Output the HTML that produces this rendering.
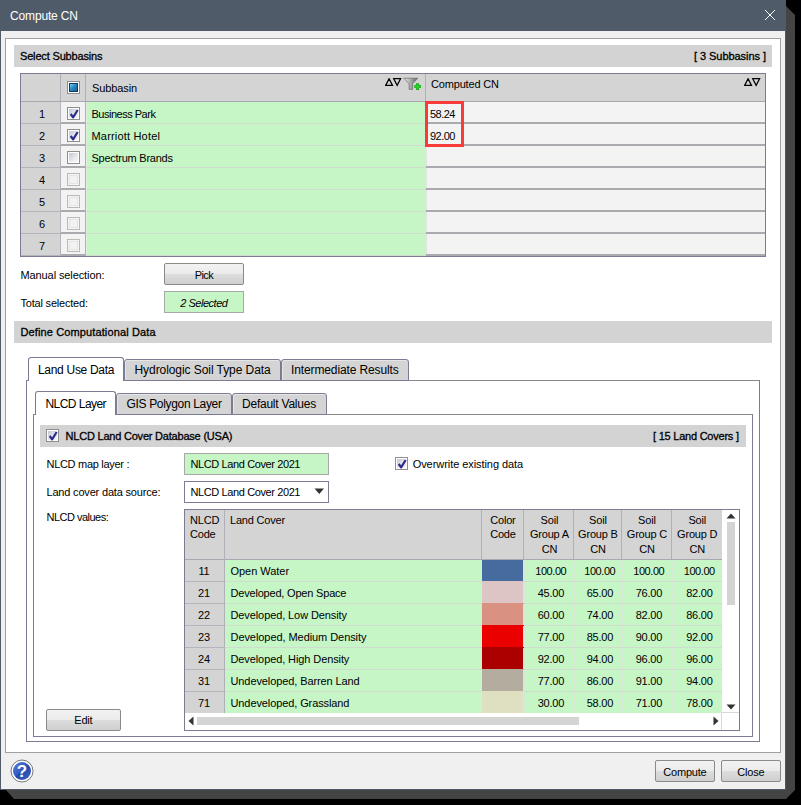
<!DOCTYPE html>
<html><head><meta charset="utf-8"><style>
html,body{margin:0;padding:0;background:#000;width:801px;height:805px;overflow:hidden}
body{position:relative;font-family:"Liberation Sans", sans-serif;color:#000}
.a{position:absolute;box-sizing:content-box}
.t{position:absolute;white-space:nowrap;font-family:"Liberation Sans", sans-serif}
</style></head><body>
<svg class="a" style="left:0;top:0" width="801" height="805"><polygon points="786,6 795,15 795,790 786,799 14,799 6,790" fill="#444"/></svg>
<div class="a" style="left:0px;top:0px;width:786px;height:790px;background:#f0f0f0;box-shadow:inset 0 0 0 1px #505b69;"></div>
<div class="a" style="left:0px;top:0px;width:786px;height:31px;background:#505b69;"></div>
<div class="t" style="top:9.84px;font-size:12px;line-height:12px;letter-spacing:-0.151px;color:#fff;left:10px;">Compute CN</div>
<svg class="a" style="left:763px;top:8px" width="14" height="14"><path d="M2 2 L12 12 M12 2 L2 12" stroke="#fff" stroke-width="1"/></svg>
<div class="a" style="left:5px;top:38px;width:776px;height:715px;background:#fff;box-shadow:inset 0 0 0 1px #a0a0a0;"></div>
<div class="a" style="left:14px;top:45px;width:758px;height:22px;background:#d3d3d3;"></div>
<div class="t" style="top:50.69px;font-size:11px;line-height:11px;-webkit-text-stroke:0.3px currentColor;letter-spacing:-0.167px;left:20px;">Select Subbasins</div>
<div class="t" style="top:50.69px;font-size:11px;line-height:11px;-webkit-text-stroke:0.3px currentColor;letter-spacing:-0.056px;right:35.056px;text-align:right;">[ 3 Subbasins ]</div>
<div class="a" style="left:20px;top:73px;width:746px;height:184px;background:#fff;"></div>
<div class="a" style="left:20px;top:73px;width:746px;height:28px;background:#d4d4d4;"></div>
<div class="a" style="left:20px;top:102px;width:40px;height:21px;background:#d4d4d4;"></div>
<div class="a" style="left:60px;top:102px;width:26px;height:21px;background:#f3f3f3;"></div>
<div class="a" style="left:86px;top:102px;width:340px;height:21px;background:#c6f5c6;"></div>
<div class="a" style="left:86px;top:102px;width:1px;height:21px;background:#dff0df;"></div>
<div class="a" style="left:426px;top:102px;width:339px;height:21px;background:#f3f3f3;"></div>
<div class="a" style="left:426px;top:102px;width:1px;height:21px;background:#e4e4e4;"></div>
<div class="a" style="left:20px;top:124px;width:40px;height:21px;background:#d4d4d4;"></div>
<div class="a" style="left:60px;top:124px;width:26px;height:21px;background:#f3f3f3;"></div>
<div class="a" style="left:86px;top:124px;width:340px;height:21px;background:#c6f5c6;"></div>
<div class="a" style="left:86px;top:124px;width:1px;height:21px;background:#dff0df;"></div>
<div class="a" style="left:426px;top:124px;width:339px;height:21px;background:#f3f3f3;"></div>
<div class="a" style="left:426px;top:124px;width:1px;height:21px;background:#e4e4e4;"></div>
<div class="a" style="left:20px;top:146px;width:40px;height:21px;background:#d4d4d4;"></div>
<div class="a" style="left:60px;top:146px;width:26px;height:21px;background:#f3f3f3;"></div>
<div class="a" style="left:86px;top:146px;width:340px;height:21px;background:#c6f5c6;"></div>
<div class="a" style="left:86px;top:146px;width:1px;height:21px;background:#dff0df;"></div>
<div class="a" style="left:426px;top:146px;width:339px;height:21px;background:#f3f3f3;"></div>
<div class="a" style="left:426px;top:146px;width:1px;height:21px;background:#e4e4e4;"></div>
<div class="a" style="left:20px;top:168px;width:40px;height:21px;background:#d4d4d4;"></div>
<div class="a" style="left:60px;top:168px;width:26px;height:21px;background:#f3f3f3;"></div>
<div class="a" style="left:86px;top:168px;width:340px;height:21px;background:#c6f5c6;"></div>
<div class="a" style="left:86px;top:168px;width:1px;height:21px;background:#dff0df;"></div>
<div class="a" style="left:426px;top:168px;width:339px;height:21px;background:#f3f3f3;"></div>
<div class="a" style="left:426px;top:168px;width:1px;height:21px;background:#e4e4e4;"></div>
<div class="a" style="left:20px;top:190px;width:40px;height:21px;background:#d4d4d4;"></div>
<div class="a" style="left:60px;top:190px;width:26px;height:21px;background:#f3f3f3;"></div>
<div class="a" style="left:86px;top:190px;width:340px;height:21px;background:#c6f5c6;"></div>
<div class="a" style="left:86px;top:190px;width:1px;height:21px;background:#dff0df;"></div>
<div class="a" style="left:426px;top:190px;width:339px;height:21px;background:#f3f3f3;"></div>
<div class="a" style="left:426px;top:190px;width:1px;height:21px;background:#e4e4e4;"></div>
<div class="a" style="left:20px;top:212px;width:40px;height:21px;background:#d4d4d4;"></div>
<div class="a" style="left:60px;top:212px;width:26px;height:21px;background:#f3f3f3;"></div>
<div class="a" style="left:86px;top:212px;width:340px;height:21px;background:#c6f5c6;"></div>
<div class="a" style="left:86px;top:212px;width:1px;height:21px;background:#dff0df;"></div>
<div class="a" style="left:426px;top:212px;width:339px;height:21px;background:#f3f3f3;"></div>
<div class="a" style="left:426px;top:212px;width:1px;height:21px;background:#e4e4e4;"></div>
<div class="a" style="left:20px;top:234px;width:40px;height:21px;background:#d4d4d4;"></div>
<div class="a" style="left:60px;top:234px;width:26px;height:21px;background:#f3f3f3;"></div>
<div class="a" style="left:86px;top:234px;width:340px;height:21px;background:#c6f5c6;"></div>
<div class="a" style="left:86px;top:234px;width:1px;height:21px;background:#dff0df;"></div>
<div class="a" style="left:426px;top:234px;width:339px;height:21px;background:#f3f3f3;"></div>
<div class="a" style="left:426px;top:234px;width:1px;height:21px;background:#e4e4e4;"></div>
<div class="a" style="left:20px;top:123px;width:40px;height:1px;background:#b4b4bc;"></div>
<div class="a" style="left:60px;top:122px;width:26px;height:2px;background:#a9a9ae;"></div>
<div class="a" style="left:86px;top:123px;width:340px;height:1px;background:#d0dcd0;"></div>
<div class="a" style="left:426px;top:122px;width:339px;height:2px;background:#a9a9ae;"></div>
<div class="t" style="top:108.69px;font-size:11px;line-height:11px;left:27.0px;width:30px;text-align:center;">1</div>
<div class="t" style="top:108.69px;font-size:11px;line-height:11px;letter-spacing:-0.493px;left:91.5px;">Business Park</div>
<div class="a" style="left:20px;top:145px;width:40px;height:1px;background:#b4b4bc;"></div>
<div class="a" style="left:60px;top:144px;width:26px;height:2px;background:#a9a9ae;"></div>
<div class="a" style="left:86px;top:145px;width:340px;height:1px;background:#d0dcd0;"></div>
<div class="a" style="left:426px;top:144px;width:339px;height:2px;background:#a9a9ae;"></div>
<div class="t" style="top:130.69px;font-size:11px;line-height:11px;left:27.0px;width:30px;text-align:center;">2</div>
<div class="t" style="top:130.69px;font-size:11px;line-height:11px;letter-spacing:0.182px;left:91.5px;">Marriott Hotel</div>
<div class="a" style="left:20px;top:167px;width:40px;height:1px;background:#b4b4bc;"></div>
<div class="a" style="left:60px;top:166px;width:26px;height:2px;background:#a9a9ae;"></div>
<div class="a" style="left:86px;top:167px;width:340px;height:1px;background:#d0dcd0;"></div>
<div class="a" style="left:426px;top:166px;width:339px;height:2px;background:#a9a9ae;"></div>
<div class="t" style="top:152.69px;font-size:11px;line-height:11px;left:27.0px;width:30px;text-align:center;">3</div>
<div class="t" style="top:152.69px;font-size:11px;line-height:11px;letter-spacing:-0.256px;left:91.5px;">Spectrum Brands</div>
<div class="a" style="left:20px;top:189px;width:40px;height:1px;background:#b4b4bc;"></div>
<div class="a" style="left:60px;top:188px;width:26px;height:2px;background:#a9a9ae;"></div>
<div class="a" style="left:86px;top:189px;width:340px;height:1px;background:#d0dcd0;"></div>
<div class="a" style="left:426px;top:188px;width:339px;height:2px;background:#a9a9ae;"></div>
<div class="t" style="top:174.69px;font-size:11px;line-height:11px;left:27.0px;width:30px;text-align:center;">4</div>
<div class="a" style="left:20px;top:211px;width:40px;height:1px;background:#b4b4bc;"></div>
<div class="a" style="left:60px;top:210px;width:26px;height:2px;background:#a9a9ae;"></div>
<div class="a" style="left:86px;top:211px;width:340px;height:1px;background:#d0dcd0;"></div>
<div class="a" style="left:426px;top:210px;width:339px;height:2px;background:#a9a9ae;"></div>
<div class="t" style="top:196.69px;font-size:11px;line-height:11px;left:27.0px;width:30px;text-align:center;">5</div>
<div class="a" style="left:20px;top:233px;width:40px;height:1px;background:#b4b4bc;"></div>
<div class="a" style="left:60px;top:232px;width:26px;height:2px;background:#a9a9ae;"></div>
<div class="a" style="left:86px;top:233px;width:340px;height:1px;background:#d0dcd0;"></div>
<div class="a" style="left:426px;top:232px;width:339px;height:2px;background:#a9a9ae;"></div>
<div class="t" style="top:218.69px;font-size:11px;line-height:11px;left:27.0px;width:30px;text-align:center;">6</div>
<div class="a" style="left:20px;top:255px;width:40px;height:1px;background:#b4b4bc;"></div>
<div class="a" style="left:60px;top:254px;width:26px;height:2px;background:#a9a9ae;"></div>
<div class="a" style="left:86px;top:255px;width:340px;height:1px;background:#d0dcd0;"></div>
<div class="a" style="left:426px;top:254px;width:339px;height:2px;background:#a9a9ae;"></div>
<div class="t" style="top:240.69px;font-size:11px;line-height:11px;left:27.0px;width:30px;text-align:center;">7</div>
<div class="a" style="left:60px;top:73px;width:1px;height:28px;background:#b0b0b8;"></div>
<div class="a" style="left:85px;top:73px;width:1px;height:184px;background:#b0b0b8;"></div>
<div class="a" style="left:60px;top:101px;width:1px;height:155px;background:#b4b4bc;"></div>
<div class="a" style="left:425px;top:73px;width:1px;height:28px;background:#b0b0b8;"></div>
<div class="a" style="left:20px;top:101px;width:746px;height:1px;background:#a8a8b0;"></div>
<div class="a" style="left:20px;top:73px;width:744px;height:182px;border:1px solid #7b7b96"></div>
<div class="t" style="top:82.69px;font-size:11px;line-height:11px;letter-spacing:-0.1px;left:92px;">Subbasin</div>
<div class="t" style="top:78.69px;font-size:11px;line-height:11px;letter-spacing:-0.17px;left:431px;">Computed CN</div>
<svg class="a" style="left:385px;top:78px" width="17" height="10"><path d="M4.1 0.7 L7.5 7.4 L0.6 7.4 Z M8.7 0.7 L15.6 0.7 L12.15 7.4 Z" fill="none" stroke="#000" stroke-width="1.25" stroke-linejoin="miter"/></svg>
<svg class="a" style="left:744px;top:78px" width="17" height="10"><path d="M4.1 0.7 L7.5 7.4 L0.6 7.4 Z M8.7 0.7 L15.6 0.7 L12.15 7.4 Z" fill="none" stroke="#000" stroke-width="1.25" stroke-linejoin="miter"/></svg>
<svg class="a" style="left:403px;top:77px" width="20" height="14"><defs><linearGradient id="fg" x1="0" x2="1"><stop offset="0" stop-color="#ececec"/><stop offset="0.45" stop-color="#b0b0b0"/><stop offset="0.7" stop-color="#8a8a8a"/><stop offset="1" stop-color="#707070"/></linearGradient></defs><path d="M0.8 1.2 L14.8 1.2 L9.6 6.8 L9.6 12.4 L6.1 12.4 L6.1 6.8 Z" fill="url(#fg)" stroke="#6a6a6a" stroke-width="0.7" stroke-linejoin="round"/><path d="M14.6 6.3 L14.6 12.9 M11.3 9.6 L17.9 9.6" stroke="#15a815" stroke-width="3"/><path d="M14.6 6.9 L14.6 12.3 M11.9 9.6 L17.3 9.6" stroke="#2bd42b" stroke-width="1.6"/></svg>
<div class="a" style="left:67px;top:81px;width:11px;height:11px;border:1px solid #8e8f8f;background:#fff"></div>
<div class="a" style="left:69px;top:83px;width:9px;height:9px;background:linear-gradient(135deg,#c3c7d4,#e9eaee 60%,#f7f7f7)"></div>
<div class="a" style="left:70px;top:84px;width:7px;height:7px;background:linear-gradient(135deg,#78d0f0,#2a8cc4 45%,#1f5a94);box-shadow:0 0 0 1px #0f3a68"></div>
<div class="a" style="left:67px;top:107px;width:11px;height:11px;border:1px solid #8e8f8f;background:#fff"></div>
<div class="a" style="left:69px;top:109px;width:9px;height:9px;background:linear-gradient(135deg,#c3c7d4,#e9eaee 60%,#f7f7f7)"></div>
<svg class="a" style="left:69px;top:109px" width="10" height="10"><path d="M1.7 5.0 L4.1 8.4 L8.7 1.0" fill="none" stroke="#2c2c8c" stroke-width="2.2" stroke-linejoin="round"/></svg>
<div class="a" style="left:67px;top:129px;width:11px;height:11px;border:1px solid #8e8f8f;background:#fff"></div>
<div class="a" style="left:69px;top:131px;width:9px;height:9px;background:linear-gradient(135deg,#c3c7d4,#e9eaee 60%,#f7f7f7)"></div>
<svg class="a" style="left:69px;top:131px" width="10" height="10"><path d="M1.7 5.0 L4.1 8.4 L8.7 1.0" fill="none" stroke="#2c2c8c" stroke-width="2.2" stroke-linejoin="round"/></svg>
<div class="a" style="left:67px;top:151px;width:11px;height:11px;border:1px solid #8e8f8f;background:#fff"></div>
<div class="a" style="left:69px;top:153px;width:9px;height:9px;background:linear-gradient(135deg,#c3c7d4,#e9eaee 60%,#f7f7f7)"></div>
<div class="a" style="left:67px;top:173px;width:11px;height:11px;border:1px solid #b9b9b9;background:#f4f4f4"></div>
<div class="a" style="left:69px;top:175px;width:9px;height:9px;background:#f2f2f2;box-shadow:inset 0 0 0 1px #e4e4e4"></div>
<div class="a" style="left:67px;top:195px;width:11px;height:11px;border:1px solid #b9b9b9;background:#f4f4f4"></div>
<div class="a" style="left:69px;top:197px;width:9px;height:9px;background:#f2f2f2;box-shadow:inset 0 0 0 1px #e4e4e4"></div>
<div class="a" style="left:67px;top:217px;width:11px;height:11px;border:1px solid #b9b9b9;background:#f4f4f4"></div>
<div class="a" style="left:69px;top:219px;width:9px;height:9px;background:#f2f2f2;box-shadow:inset 0 0 0 1px #e4e4e4"></div>
<div class="a" style="left:67px;top:239px;width:11px;height:11px;border:1px solid #b9b9b9;background:#f4f4f4"></div>
<div class="a" style="left:69px;top:241px;width:9px;height:9px;background:#f2f2f2;box-shadow:inset 0 0 0 1px #e4e4e4"></div>
<div class="a" style="left:425px;top:101px;width:33px;height:40px;border:3px solid #f73b3b"></div>
<div class="t" style="top:108.69px;font-size:11px;line-height:11px;letter-spacing:-0.533px;left:430px;">58.24</div>
<div class="t" style="top:130.69px;font-size:11px;line-height:11px;letter-spacing:-0.533px;left:430px;">92.00</div>
<div class="t" style="top:269.69px;font-size:11px;line-height:11px;letter-spacing:-0.101px;left:20.5px;">Manual selection:</div>
<div class="t" style="top:297.69px;font-size:11px;line-height:11px;letter-spacing:-0.202px;left:20.5px;">Total selected:</div>
<div class="a" style="left:164px;top:263px;width:78px;height:20px;border:1px solid #8a8a8a;border-radius:2px;background:linear-gradient(#f2f2f2 0%,#ebebeb 50%,#dddddd 50%,#cfcfcf 100%)"></div>
<div class="t" style="top:269.69px;font-size:11px;line-height:11px;letter-spacing:-0.594px;left:163.903px;width:80px;text-align:center;">Pick</div>
<div class="a" style="left:164px;top:291px;width:78px;height:20px;border:1px solid #a8a8a8;background:#c6f5c6"></div>
<div class="t" style="top:297.69px;font-size:11px;line-height:11px;letter-spacing:-0.465px;font-style:italic;left:163.8675px;width:80px;text-align:center;">2 Selected</div>
<div class="a" style="left:14px;top:321px;width:758px;height:22px;background:#d3d3d3;"></div>
<div class="t" style="top:326.69px;font-size:11px;line-height:11px;-webkit-text-stroke:0.3px currentColor;letter-spacing:0.122px;left:20.5px;">Define Computational Data</div>
<div class="a" style="left:26px;top:380px;width:732px;height:360px;border:1px solid #7b7b96;border-top-color:#888"></div>
<div class="a" style="left:124px;top:359px;width:155px;height:20px;border:1px solid #7b7b96;border-radius:3px 3px 0 0;background:#d4d4d4;box-shadow:inset 1px 1px 0 #e6e6e6"></div>
<div class="t" style="top:363.84px;font-size:12px;line-height:12px;letter-spacing:-0.07px;left:134.5px;">Hydrologic Soil Type Data</div>
<div class="a" style="left:281px;top:359px;width:126px;height:20px;border:1px solid #7b7b96;border-radius:3px 3px 0 0;background:#d4d4d4;box-shadow:inset 1px 1px 0 #e6e6e6"></div>
<div class="t" style="top:363.84px;font-size:12px;line-height:12px;letter-spacing:-0.12px;left:291px;">Intermediate Results</div>
<div class="a" style="left:28px;top:357px;width:94px;height:23px;border:1px solid #7b7b96;border-bottom:none;border-radius:3px 3px 0 0;background:#fff"></div>
<div class="t" style="top:363.84px;font-size:12px;line-height:12px;letter-spacing:-0.3px;left:38px;">Land Use Data</div>
<div class="a" style="left:33px;top:414px;width:718px;height:321px;border:1px solid #7b7b96;border-top-color:#888"></div>
<div class="a" style="left:116px;top:393px;width:114px;height:20px;border:1px solid #7b7b96;border-radius:3px 3px 0 0;background:#d4d4d4;box-shadow:inset 1px 1px 0 #e6e6e6"></div>
<div class="t" style="top:397.84px;font-size:12px;line-height:12px;letter-spacing:-0.33px;left:126.5px;">GIS Polygon Layer</div>
<div class="a" style="left:232px;top:393px;width:93px;height:20px;border:1px solid #7b7b96;border-radius:3px 3px 0 0;background:#d4d4d4;box-shadow:inset 1px 1px 0 #e6e6e6"></div>
<div class="t" style="top:397.84px;font-size:12px;line-height:12px;letter-spacing:-0.23px;left:242px;">Default Values</div>
<div class="a" style="left:35px;top:391px;width:79px;height:23px;border:1px solid #7b7b96;border-bottom:none;border-radius:3px 3px 0 0;background:#fff"></div>
<div class="t" style="top:397.84px;font-size:12px;line-height:12px;letter-spacing:-0.55px;left:45.5px;">NLCD Layer</div>
<div class="a" style="left:40px;top:425px;width:706px;height:22px;background:#d3d3d3;"></div>
<div class="a" style="left:46px;top:429px;width:11px;height:11px;border:1px solid #8e8f8f;background:#fff"></div>
<div class="a" style="left:48px;top:431px;width:9px;height:9px;background:linear-gradient(135deg,#c3c7d4,#e9eaee 60%,#f7f7f7)"></div>
<svg class="a" style="left:48px;top:431px" width="10" height="10"><path d="M1.7 5.0 L4.1 8.4 L8.7 1.0" fill="none" stroke="#2c2c8c" stroke-width="2.2" stroke-linejoin="round"/></svg>
<div class="t" style="top:430.69px;font-size:11px;line-height:11px;-webkit-text-stroke:0.3px currentColor;letter-spacing:-0.208px;left:65.5px;">NLCD Land Cover Database (USA)</div>
<div class="t" style="top:430.69px;font-size:11px;line-height:11px;-webkit-text-stroke:0.3px currentColor;letter-spacing:-0.229px;right:62.229px;text-align:right;">[ 15 Land Covers ]</div>
<div class="t" style="top:458.69px;font-size:11px;line-height:11px;letter-spacing:-0.295px;left:46.5px;">NLCD map layer :</div>
<div class="t" style="top:486.69px;font-size:11px;line-height:11px;letter-spacing:-0.183px;left:46.5px;">Land cover data source:</div>
<div class="t" style="top:511.69px;font-size:11px;line-height:11px;letter-spacing:-0.514px;left:46.5px;">NLCD values:</div>
<div class="a" style="left:184px;top:453px;width:143px;height:20px;border:1px solid #a8a8a8;background:#c6f5c6"></div>
<div class="t" style="top:458.69px;font-size:11px;line-height:11px;letter-spacing:-0.39px;left:190.5px;">NLCD Land Cover 2021</div>
<div class="a" style="left:184px;top:481px;width:143px;height:20px;border:1px solid #7b7b96;background:#fff"></div>
<div class="t" style="top:486.69px;font-size:11px;line-height:11px;letter-spacing:-0.39px;left:190.5px;">NLCD Land Cover 2021</div>
<svg class="a" style="left:314px;top:488px" width="11" height="7"><path d="M0.5 0.5 L10 0.5 L5.25 6 Z" fill="#333"/></svg>
<div class="a" style="left:395px;top:457px;width:11px;height:11px;border:1px solid #8e8f8f;background:#fff"></div>
<div class="a" style="left:397px;top:459px;width:9px;height:9px;background:linear-gradient(135deg,#c3c7d4,#e9eaee 60%,#f7f7f7)"></div>
<svg class="a" style="left:397px;top:459px" width="10" height="10"><path d="M1.7 5.0 L4.1 8.4 L8.7 1.0" fill="none" stroke="#2c2c8c" stroke-width="2.2" stroke-linejoin="round"/></svg>
<div class="t" style="top:458.69px;font-size:11px;line-height:11px;letter-spacing:-0.063px;left:412.7px;">Overwrite existing data</div>
<div class="a" style="left:184px;top:509px;width:555px;height:221px;background:#fff"></div>
<div class="a" style="left:184px;top:509px;width:538px;height:50px;background:#d4d4d4;"></div>
<div class="a" style="left:224px;top:509px;width:1px;height:50px;background:#b0b0b8;"></div>
<div class="a" style="left:481px;top:509px;width:1px;height:50px;background:#b0b0b8;"></div>
<div class="a" style="left:523px;top:509px;width:1px;height:50px;background:#b0b0b8;"></div>
<div class="a" style="left:573px;top:509px;width:1px;height:50px;background:#b0b0b8;"></div>
<div class="a" style="left:621px;top:509px;width:1px;height:50px;background:#b0b0b8;"></div>
<div class="a" style="left:671px;top:509px;width:1px;height:50px;background:#b0b0b8;"></div>
<div class="a" style="left:184px;top:559px;width:538px;height:1px;background:#a8a8b0;"></div>
<div class="t" style="top:514.69px;font-size:11px;line-height:11px;letter-spacing:-0.2px;left:190px;">NLCD</div>
<div class="t" style="top:528.69px;font-size:11px;line-height:11px;letter-spacing:-0.2px;left:190px;">Code</div>
<div class="t" style="top:514.69px;font-size:11px;line-height:11px;letter-spacing:-0.2px;left:230px;">Land Cover</div>
<div class="t" style="top:514.69px;font-size:11px;line-height:11px;letter-spacing:-0.2px;left:472.9px;width:60px;text-align:center;">Color</div>
<div class="t" style="top:528.69px;font-size:11px;line-height:11px;letter-spacing:-0.2px;left:472.9px;width:60px;text-align:center;">Code</div>
<div class="t" style="top:514.69px;font-size:11px;line-height:11px;letter-spacing:-0.2px;left:519.4px;width:60px;text-align:center;">Soil</div>
<div class="t" style="top:528.69px;font-size:11px;line-height:11px;letter-spacing:-0.2px;left:519.4px;width:60px;text-align:center;">Group A</div>
<div class="t" style="top:543.69px;font-size:11px;line-height:11px;letter-spacing:-0.2px;left:519.4px;width:60px;text-align:center;">CN</div>
<div class="t" style="top:514.69px;font-size:11px;line-height:11px;letter-spacing:-0.2px;left:567.9px;width:60px;text-align:center;">Soil</div>
<div class="t" style="top:528.69px;font-size:11px;line-height:11px;letter-spacing:-0.2px;left:567.9px;width:60px;text-align:center;">Group B</div>
<div class="t" style="top:543.69px;font-size:11px;line-height:11px;letter-spacing:-0.2px;left:567.9px;width:60px;text-align:center;">CN</div>
<div class="t" style="top:514.69px;font-size:11px;line-height:11px;letter-spacing:-0.2px;left:616.9px;width:60px;text-align:center;">Soil</div>
<div class="t" style="top:528.69px;font-size:11px;line-height:11px;letter-spacing:-0.2px;left:616.9px;width:60px;text-align:center;">Group C</div>
<div class="t" style="top:543.69px;font-size:11px;line-height:11px;letter-spacing:-0.2px;left:616.9px;width:60px;text-align:center;">CN</div>
<div class="t" style="top:514.69px;font-size:11px;line-height:11px;letter-spacing:-0.2px;left:667.1999999999999px;width:60px;text-align:center;">Soil</div>
<div class="t" style="top:528.69px;font-size:11px;line-height:11px;letter-spacing:-0.2px;left:667.1999999999999px;width:60px;text-align:center;">Group D</div>
<div class="t" style="top:543.69px;font-size:11px;line-height:11px;letter-spacing:-0.2px;left:667.1999999999999px;width:60px;text-align:center;">CN</div>
<div class="a" style="left:184px;top:560px;width:40px;height:22px;background:#d4d4d4;"></div>
<div class="a" style="left:184px;top:581px;width:40px;height:1px;background:#b4b4bc;"></div>
<div class="a" style="left:225px;top:560px;width:257px;height:22px;background:#c6f5c6;"></div>
<div class="a" style="left:225px;top:560px;width:1px;height:22px;background:#d8e8d6;"></div>
<div class="a" style="left:225px;top:581px;width:257px;height:1px;background:#cfdccf;"></div>
<div class="a" style="left:482px;top:560px;width:42px;height:21px;background:#466b9f;"></div>
<div class="a" style="left:523px;top:560px;width:50px;height:22px;background:#c6f5c6;"></div>
<div class="a" style="left:523px;top:560px;width:2px;height:22px;background:#d8e8d6;"></div>
<div class="a" style="left:523px;top:581px;width:50px;height:1px;background:#cfdccf;"></div>
<div class="t" style="top:565.69px;font-size:11px;line-height:11px;letter-spacing:-0.451px;left:525.7745px;width:50px;text-align:center;">100.00</div>
<div class="a" style="left:573px;top:560px;width:48px;height:22px;background:#c6f5c6;"></div>
<div class="a" style="left:573px;top:560px;width:2px;height:22px;background:#d8e8d6;"></div>
<div class="a" style="left:573px;top:581px;width:48px;height:1px;background:#cfdccf;"></div>
<div class="t" style="top:565.69px;font-size:11px;line-height:11px;letter-spacing:-0.451px;left:574.7745px;width:50px;text-align:center;">100.00</div>
<div class="a" style="left:621px;top:560px;width:50px;height:22px;background:#c6f5c6;"></div>
<div class="a" style="left:621px;top:560px;width:2px;height:22px;background:#d8e8d6;"></div>
<div class="a" style="left:621px;top:581px;width:50px;height:1px;background:#cfdccf;"></div>
<div class="t" style="top:565.69px;font-size:11px;line-height:11px;letter-spacing:-0.451px;left:623.7745px;width:50px;text-align:center;">100.00</div>
<div class="a" style="left:671px;top:560px;width:51px;height:22px;background:#c6f5c6;"></div>
<div class="a" style="left:671px;top:560px;width:2px;height:22px;background:#d8e8d6;"></div>
<div class="a" style="left:671px;top:581px;width:51px;height:1px;background:#cfdccf;"></div>
<div class="t" style="top:565.69px;font-size:11px;line-height:11px;letter-spacing:-0.451px;left:674.2745px;width:50px;text-align:center;">100.00</div>
<div class="t" style="top:565.69px;font-size:11px;line-height:11px;letter-spacing:-0.2px;left:183.9px;width:40px;text-align:center;">11</div>
<div class="t" style="top:565.69px;font-size:11px;line-height:11px;letter-spacing:-0.034px;left:230.5px;">Open Water</div>
<div class="a" style="left:184px;top:582px;width:40px;height:22px;background:#d4d4d4;"></div>
<div class="a" style="left:184px;top:603px;width:40px;height:1px;background:#b4b4bc;"></div>
<div class="a" style="left:225px;top:582px;width:257px;height:22px;background:#c6f5c6;"></div>
<div class="a" style="left:225px;top:582px;width:1px;height:22px;background:#d8e8d6;"></div>
<div class="a" style="left:225px;top:603px;width:257px;height:1px;background:#cfdccf;"></div>
<div class="a" style="left:482px;top:581px;width:42px;height:22px;background:#dec5c5;"></div>
<div class="a" style="left:523px;top:582px;width:50px;height:22px;background:#c6f5c6;"></div>
<div class="a" style="left:523px;top:582px;width:2px;height:22px;background:#d8e8d6;"></div>
<div class="a" style="left:523px;top:603px;width:50px;height:1px;background:#cfdccf;"></div>
<div class="t" style="top:587.69px;font-size:11px;line-height:11px;letter-spacing:-0.233px;left:525.8835px;width:50px;text-align:center;">45.00</div>
<div class="a" style="left:573px;top:582px;width:48px;height:22px;background:#c6f5c6;"></div>
<div class="a" style="left:573px;top:582px;width:2px;height:22px;background:#d8e8d6;"></div>
<div class="a" style="left:573px;top:603px;width:48px;height:1px;background:#cfdccf;"></div>
<div class="t" style="top:587.69px;font-size:11px;line-height:11px;letter-spacing:-0.233px;left:574.8835px;width:50px;text-align:center;">65.00</div>
<div class="a" style="left:621px;top:582px;width:50px;height:22px;background:#c6f5c6;"></div>
<div class="a" style="left:621px;top:582px;width:2px;height:22px;background:#d8e8d6;"></div>
<div class="a" style="left:621px;top:603px;width:50px;height:1px;background:#cfdccf;"></div>
<div class="t" style="top:587.69px;font-size:11px;line-height:11px;letter-spacing:-0.233px;left:623.8835px;width:50px;text-align:center;">76.00</div>
<div class="a" style="left:671px;top:582px;width:51px;height:22px;background:#c6f5c6;"></div>
<div class="a" style="left:671px;top:582px;width:2px;height:22px;background:#d8e8d6;"></div>
<div class="a" style="left:671px;top:603px;width:51px;height:1px;background:#cfdccf;"></div>
<div class="t" style="top:587.69px;font-size:11px;line-height:11px;letter-spacing:-0.233px;left:674.3835px;width:50px;text-align:center;">82.00</div>
<div class="t" style="top:587.69px;font-size:11px;line-height:11px;letter-spacing:-0.2px;left:183.9px;width:40px;text-align:center;">21</div>
<div class="t" style="top:587.69px;font-size:11px;line-height:11px;letter-spacing:-0.194px;left:230.5px;">Developed, Open Space</div>
<div class="a" style="left:184px;top:604px;width:40px;height:22px;background:#d4d4d4;"></div>
<div class="a" style="left:184px;top:625px;width:40px;height:1px;background:#b4b4bc;"></div>
<div class="a" style="left:225px;top:604px;width:257px;height:22px;background:#c6f5c6;"></div>
<div class="a" style="left:225px;top:604px;width:1px;height:22px;background:#d8e8d6;"></div>
<div class="a" style="left:225px;top:625px;width:257px;height:1px;background:#cfdccf;"></div>
<div class="a" style="left:482px;top:603px;width:42px;height:22px;background:#d99282;"></div>
<div class="a" style="left:523px;top:604px;width:50px;height:22px;background:#c6f5c6;"></div>
<div class="a" style="left:523px;top:604px;width:2px;height:22px;background:#d8e8d6;"></div>
<div class="a" style="left:523px;top:625px;width:50px;height:1px;background:#cfdccf;"></div>
<div class="t" style="top:609.69px;font-size:11px;line-height:11px;letter-spacing:-0.233px;left:525.8835px;width:50px;text-align:center;">60.00</div>
<div class="a" style="left:573px;top:604px;width:48px;height:22px;background:#c6f5c6;"></div>
<div class="a" style="left:573px;top:604px;width:2px;height:22px;background:#d8e8d6;"></div>
<div class="a" style="left:573px;top:625px;width:48px;height:1px;background:#cfdccf;"></div>
<div class="t" style="top:609.69px;font-size:11px;line-height:11px;letter-spacing:-0.233px;left:574.8835px;width:50px;text-align:center;">74.00</div>
<div class="a" style="left:621px;top:604px;width:50px;height:22px;background:#c6f5c6;"></div>
<div class="a" style="left:621px;top:604px;width:2px;height:22px;background:#d8e8d6;"></div>
<div class="a" style="left:621px;top:625px;width:50px;height:1px;background:#cfdccf;"></div>
<div class="t" style="top:609.69px;font-size:11px;line-height:11px;letter-spacing:-0.233px;left:623.8835px;width:50px;text-align:center;">82.00</div>
<div class="a" style="left:671px;top:604px;width:51px;height:22px;background:#c6f5c6;"></div>
<div class="a" style="left:671px;top:604px;width:2px;height:22px;background:#d8e8d6;"></div>
<div class="a" style="left:671px;top:625px;width:51px;height:1px;background:#cfdccf;"></div>
<div class="t" style="top:609.69px;font-size:11px;line-height:11px;letter-spacing:-0.233px;left:674.3835px;width:50px;text-align:center;">86.00</div>
<div class="t" style="top:609.69px;font-size:11px;line-height:11px;letter-spacing:-0.2px;left:183.9px;width:40px;text-align:center;">22</div>
<div class="t" style="top:609.69px;font-size:11px;line-height:11px;letter-spacing:-0.1px;left:230.5px;">Developed, Low Density</div>
<div class="a" style="left:184px;top:626px;width:40px;height:22px;background:#d4d4d4;"></div>
<div class="a" style="left:184px;top:647px;width:40px;height:1px;background:#b4b4bc;"></div>
<div class="a" style="left:225px;top:626px;width:257px;height:22px;background:#c6f5c6;"></div>
<div class="a" style="left:225px;top:626px;width:1px;height:22px;background:#d8e8d6;"></div>
<div class="a" style="left:225px;top:647px;width:257px;height:1px;background:#cfdccf;"></div>
<div class="a" style="left:482px;top:625px;width:42px;height:22px;background:#eb0000;"></div>
<div class="a" style="left:523px;top:626px;width:50px;height:22px;background:#c6f5c6;"></div>
<div class="a" style="left:523px;top:626px;width:2px;height:22px;background:#d8e8d6;"></div>
<div class="a" style="left:523px;top:647px;width:50px;height:1px;background:#cfdccf;"></div>
<div class="t" style="top:631.69px;font-size:11px;line-height:11px;letter-spacing:-0.233px;left:525.8835px;width:50px;text-align:center;">77.00</div>
<div class="a" style="left:573px;top:626px;width:48px;height:22px;background:#c6f5c6;"></div>
<div class="a" style="left:573px;top:626px;width:2px;height:22px;background:#d8e8d6;"></div>
<div class="a" style="left:573px;top:647px;width:48px;height:1px;background:#cfdccf;"></div>
<div class="t" style="top:631.69px;font-size:11px;line-height:11px;letter-spacing:-0.233px;left:574.8835px;width:50px;text-align:center;">85.00</div>
<div class="a" style="left:621px;top:626px;width:50px;height:22px;background:#c6f5c6;"></div>
<div class="a" style="left:621px;top:626px;width:2px;height:22px;background:#d8e8d6;"></div>
<div class="a" style="left:621px;top:647px;width:50px;height:1px;background:#cfdccf;"></div>
<div class="t" style="top:631.69px;font-size:11px;line-height:11px;letter-spacing:-0.233px;left:623.8835px;width:50px;text-align:center;">90.00</div>
<div class="a" style="left:671px;top:626px;width:51px;height:22px;background:#c6f5c6;"></div>
<div class="a" style="left:671px;top:626px;width:2px;height:22px;background:#d8e8d6;"></div>
<div class="a" style="left:671px;top:647px;width:51px;height:1px;background:#cfdccf;"></div>
<div class="t" style="top:631.69px;font-size:11px;line-height:11px;letter-spacing:-0.233px;left:674.3835px;width:50px;text-align:center;">92.00</div>
<div class="t" style="top:631.69px;font-size:11px;line-height:11px;letter-spacing:-0.2px;left:183.9px;width:40px;text-align:center;">23</div>
<div class="t" style="top:631.69px;font-size:11px;line-height:11px;letter-spacing:-0.066px;left:230.5px;">Developed, Medium Density</div>
<div class="a" style="left:184px;top:648px;width:40px;height:22px;background:#d4d4d4;"></div>
<div class="a" style="left:184px;top:669px;width:40px;height:1px;background:#b4b4bc;"></div>
<div class="a" style="left:225px;top:648px;width:257px;height:22px;background:#c6f5c6;"></div>
<div class="a" style="left:225px;top:648px;width:1px;height:22px;background:#d8e8d6;"></div>
<div class="a" style="left:225px;top:669px;width:257px;height:1px;background:#cfdccf;"></div>
<div class="a" style="left:482px;top:647px;width:42px;height:22px;background:#ab0000;"></div>
<div class="a" style="left:523px;top:648px;width:50px;height:22px;background:#c6f5c6;"></div>
<div class="a" style="left:523px;top:648px;width:2px;height:22px;background:#d8e8d6;"></div>
<div class="a" style="left:523px;top:669px;width:50px;height:1px;background:#cfdccf;"></div>
<div class="t" style="top:653.69px;font-size:11px;line-height:11px;letter-spacing:-0.233px;left:525.8835px;width:50px;text-align:center;">92.00</div>
<div class="a" style="left:573px;top:648px;width:48px;height:22px;background:#c6f5c6;"></div>
<div class="a" style="left:573px;top:648px;width:2px;height:22px;background:#d8e8d6;"></div>
<div class="a" style="left:573px;top:669px;width:48px;height:1px;background:#cfdccf;"></div>
<div class="t" style="top:653.69px;font-size:11px;line-height:11px;letter-spacing:-0.233px;left:574.8835px;width:50px;text-align:center;">94.00</div>
<div class="a" style="left:621px;top:648px;width:50px;height:22px;background:#c6f5c6;"></div>
<div class="a" style="left:621px;top:648px;width:2px;height:22px;background:#d8e8d6;"></div>
<div class="a" style="left:621px;top:669px;width:50px;height:1px;background:#cfdccf;"></div>
<div class="t" style="top:653.69px;font-size:11px;line-height:11px;letter-spacing:-0.233px;left:623.8835px;width:50px;text-align:center;">96.00</div>
<div class="a" style="left:671px;top:648px;width:51px;height:22px;background:#c6f5c6;"></div>
<div class="a" style="left:671px;top:648px;width:2px;height:22px;background:#d8e8d6;"></div>
<div class="a" style="left:671px;top:669px;width:51px;height:1px;background:#cfdccf;"></div>
<div class="t" style="top:653.69px;font-size:11px;line-height:11px;letter-spacing:-0.233px;left:674.3835px;width:50px;text-align:center;">96.00</div>
<div class="t" style="top:653.69px;font-size:11px;line-height:11px;letter-spacing:-0.2px;left:183.9px;width:40px;text-align:center;">24</div>
<div class="t" style="top:653.69px;font-size:11px;line-height:11px;letter-spacing:-0.1px;left:230.5px;">Developed, High Density</div>
<div class="a" style="left:184px;top:670px;width:40px;height:22px;background:#d4d4d4;"></div>
<div class="a" style="left:184px;top:691px;width:40px;height:1px;background:#b4b4bc;"></div>
<div class="a" style="left:225px;top:670px;width:257px;height:22px;background:#c6f5c6;"></div>
<div class="a" style="left:225px;top:670px;width:1px;height:22px;background:#d8e8d6;"></div>
<div class="a" style="left:225px;top:691px;width:257px;height:1px;background:#cfdccf;"></div>
<div class="a" style="left:482px;top:669px;width:42px;height:22px;background:#b3ac9f;"></div>
<div class="a" style="left:523px;top:670px;width:50px;height:22px;background:#c6f5c6;"></div>
<div class="a" style="left:523px;top:670px;width:2px;height:22px;background:#d8e8d6;"></div>
<div class="a" style="left:523px;top:691px;width:50px;height:1px;background:#cfdccf;"></div>
<div class="t" style="top:675.69px;font-size:11px;line-height:11px;letter-spacing:-0.233px;left:525.8835px;width:50px;text-align:center;">77.00</div>
<div class="a" style="left:573px;top:670px;width:48px;height:22px;background:#c6f5c6;"></div>
<div class="a" style="left:573px;top:670px;width:2px;height:22px;background:#d8e8d6;"></div>
<div class="a" style="left:573px;top:691px;width:48px;height:1px;background:#cfdccf;"></div>
<div class="t" style="top:675.69px;font-size:11px;line-height:11px;letter-spacing:-0.233px;left:574.8835px;width:50px;text-align:center;">86.00</div>
<div class="a" style="left:621px;top:670px;width:50px;height:22px;background:#c6f5c6;"></div>
<div class="a" style="left:621px;top:670px;width:2px;height:22px;background:#d8e8d6;"></div>
<div class="a" style="left:621px;top:691px;width:50px;height:1px;background:#cfdccf;"></div>
<div class="t" style="top:675.69px;font-size:11px;line-height:11px;letter-spacing:-0.233px;left:623.8835px;width:50px;text-align:center;">91.00</div>
<div class="a" style="left:671px;top:670px;width:51px;height:22px;background:#c6f5c6;"></div>
<div class="a" style="left:671px;top:670px;width:2px;height:22px;background:#d8e8d6;"></div>
<div class="a" style="left:671px;top:691px;width:51px;height:1px;background:#cfdccf;"></div>
<div class="t" style="top:675.69px;font-size:11px;line-height:11px;letter-spacing:-0.233px;left:674.3835px;width:50px;text-align:center;">94.00</div>
<div class="t" style="top:675.69px;font-size:11px;line-height:11px;letter-spacing:-0.2px;left:183.9px;width:40px;text-align:center;">31</div>
<div class="t" style="top:675.69px;font-size:11px;line-height:11px;letter-spacing:-0.1px;left:230.5px;">Undeveloped, Barren Land</div>
<div class="a" style="left:184px;top:692px;width:40px;height:22px;background:#d4d4d4;"></div>
<div class="a" style="left:184px;top:713px;width:40px;height:1px;background:#b4b4bc;"></div>
<div class="a" style="left:225px;top:692px;width:257px;height:22px;background:#c6f5c6;"></div>
<div class="a" style="left:225px;top:692px;width:1px;height:22px;background:#d8e8d6;"></div>
<div class="a" style="left:225px;top:713px;width:257px;height:1px;background:#cfdccf;"></div>
<div class="a" style="left:482px;top:691px;width:42px;height:22px;background:#dfdfc2;"></div>
<div class="a" style="left:523px;top:692px;width:50px;height:22px;background:#c6f5c6;"></div>
<div class="a" style="left:523px;top:692px;width:2px;height:22px;background:#d8e8d6;"></div>
<div class="a" style="left:523px;top:713px;width:50px;height:1px;background:#cfdccf;"></div>
<div class="t" style="top:697.69px;font-size:11px;line-height:11px;letter-spacing:-0.233px;left:525.8835px;width:50px;text-align:center;">30.00</div>
<div class="a" style="left:573px;top:692px;width:48px;height:22px;background:#c6f5c6;"></div>
<div class="a" style="left:573px;top:692px;width:2px;height:22px;background:#d8e8d6;"></div>
<div class="a" style="left:573px;top:713px;width:48px;height:1px;background:#cfdccf;"></div>
<div class="t" style="top:697.69px;font-size:11px;line-height:11px;letter-spacing:-0.233px;left:574.8835px;width:50px;text-align:center;">58.00</div>
<div class="a" style="left:621px;top:692px;width:50px;height:22px;background:#c6f5c6;"></div>
<div class="a" style="left:621px;top:692px;width:2px;height:22px;background:#d8e8d6;"></div>
<div class="a" style="left:621px;top:713px;width:50px;height:1px;background:#cfdccf;"></div>
<div class="t" style="top:697.69px;font-size:11px;line-height:11px;letter-spacing:-0.233px;left:623.8835px;width:50px;text-align:center;">71.00</div>
<div class="a" style="left:671px;top:692px;width:51px;height:22px;background:#c6f5c6;"></div>
<div class="a" style="left:671px;top:692px;width:2px;height:22px;background:#d8e8d6;"></div>
<div class="a" style="left:671px;top:713px;width:51px;height:1px;background:#cfdccf;"></div>
<div class="t" style="top:697.69px;font-size:11px;line-height:11px;letter-spacing:-0.233px;left:674.3835px;width:50px;text-align:center;">78.00</div>
<div class="t" style="top:697.69px;font-size:11px;line-height:11px;letter-spacing:-0.2px;left:183.9px;width:40px;text-align:center;">71</div>
<div class="t" style="top:697.69px;font-size:11px;line-height:11px;letter-spacing:-0.1px;left:230.5px;">Undeveloped, Grassland</div>
<div class="a" style="left:224px;top:559px;width:1px;height:154px;background:#b0b0b8;"></div>
<div class="a" style="left:722px;top:509px;width:17px;height:204px;background:#fff;"></div>
<div class="a" style="left:727px;top:522px;width:8px;height:83px;background:#d4d4d4;"></div>
<svg class="a" style="left:726px;top:513px" width="10" height="6"><path d="M0.5 5.5 L9.5 5.5 L5 0.5 Z" fill="#333"/></svg>
<svg class="a" style="left:726px;top:704px" width="10" height="6"><path d="M0.5 0.5 L9.5 0.5 L5 5.5 Z" fill="#333"/></svg>
<div class="a" style="left:184px;top:713px;width:538px;height:17px;background:#fff;"></div>
<div class="a" style="left:197px;top:717px;width:382px;height:8px;background:#d4d4d4;"></div>
<svg class="a" style="left:188px;top:716px" width="6" height="10"><path d="M5.5 0.5 L5.5 9.5 L0.5 5 Z" fill="#333"/></svg>
<svg class="a" style="left:713px;top:716px" width="6" height="10"><path d="M0.5 0.5 L0.5 9.5 L5.5 5 Z" fill="#333"/></svg>
<div class="a" style="left:722px;top:712px;width:17px;height:1px;background:#d8d8d8;"></div>
<div class="a" style="left:721px;top:713px;width:1px;height:17px;background:#d8d8d8;"></div>
<div class="a" style="left:184px;top:509px;width:554px;height:220px;border:1px solid #7b7b96"></div>
<div class="a" style="left:46px;top:709px;width:73px;height:20px;border:1px solid #8a8a8a;border-radius:2px;background:linear-gradient(#f2f2f2 0%,#ebebeb 50%,#dddddd 50%,#cfcfcf 100%)"></div>
<div class="t" style="top:714.69px;font-size:11px;line-height:11px;letter-spacing:-0.2px;left:45.9px;width:75px;text-align:center;">Edit</div>
<div class="a" style="left:655px;top:760px;width:58px;height:20px;border:1px solid #8a8a8a;border-radius:2px;background:linear-gradient(#f2f2f2 0%,#ebebeb 50%,#dddddd 50%,#cfcfcf 100%)"></div>
<div class="t" style="top:766.69px;font-size:11px;line-height:11px;letter-spacing:-0.2px;left:654.9px;width:60px;text-align:center;">Compute</div>
<div class="a" style="left:721px;top:760px;width:58px;height:20px;border:1px solid #8a8a8a;border-radius:2px;background:linear-gradient(#f2f2f2 0%,#ebebeb 50%,#dddddd 50%,#cfcfcf 100%)"></div>
<div class="t" style="top:766.69px;font-size:11px;line-height:11px;letter-spacing:-0.2px;left:720.9px;width:60px;text-align:center;">Close</div>
<svg class="a" style="left:10px;top:759px" width="24" height="24"><defs><linearGradient id="hb" x1="0" y1="0" x2="1" y2="1"><stop offset="0" stop-color="#5b7fd8"/><stop offset="0.5" stop-color="#2f59c0"/><stop offset="0.5" stop-color="#244aa8"/><stop offset="1" stop-color="#3a62c8"/></linearGradient></defs><circle cx="12" cy="12" r="11" fill="#fff" stroke="#777" stroke-width="1"/><circle cx="12" cy="12" r="9" fill="url(#hb)"/><text x="12" y="17.6" font-family="Liberation Sans" font-weight="700" font-size="17" fill="#fff" text-anchor="middle">?</text></svg>
</body></html>
